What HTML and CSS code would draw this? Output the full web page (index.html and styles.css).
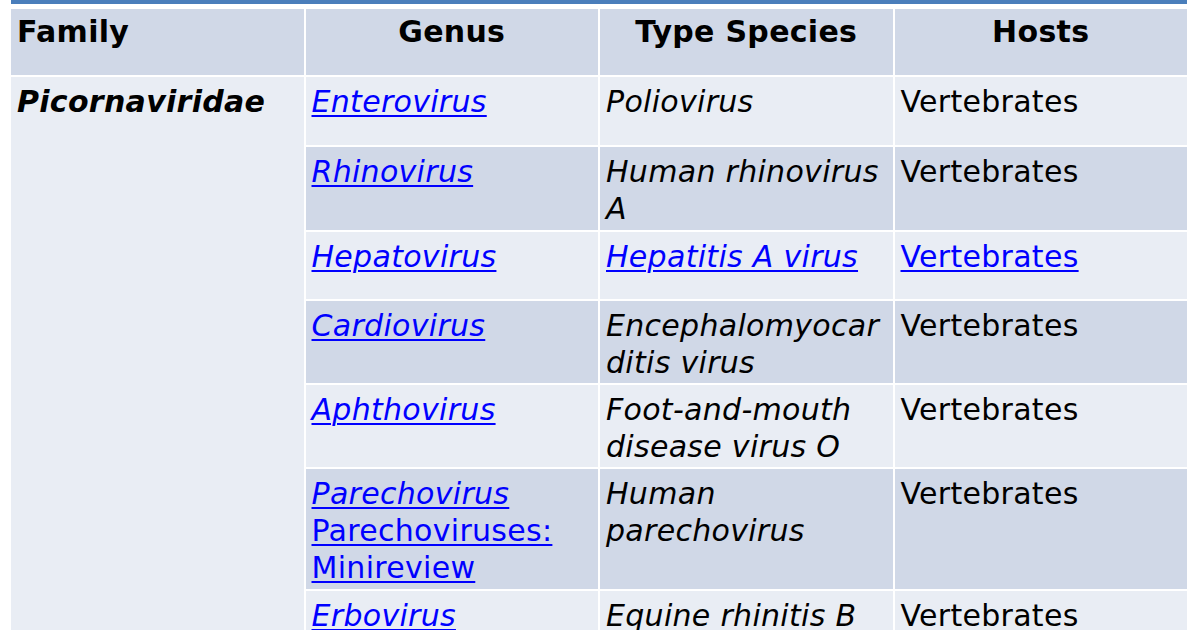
FILE: index.html
```html
<!DOCTYPE html>
<html>
<head>
<meta charset="utf-8">
<link rel="stylesheet" href="styles.css">
</head>
<body>
<div class="page">
  <div class="topbar"></div>
  <div class="grid">
    <div class="cell head left">Family</div>
    <div class="cell head">Genus</div>
    <div class="cell head">Type Species</div>
    <div class="cell head">Hosts</div>

    <div class="cell family"><b><i>Picornaviridae</i></b></div>

    <div class="cell light"><a class="it" href="#">Enterovirus</a></div>
    <div class="cell light it">Poliovirus</div>
    <div class="cell light">Vertebrates</div>

    <div class="cell dark"><a class="it" href="#">Rhinovirus</a></div>
    <div class="cell dark it">Human rhinovirus<br>A</div>
    <div class="cell dark">Vertebrates</div>

    <div class="cell light"><a class="it" href="#">Hepatovirus</a></div>
    <div class="cell light"><a class="it" href="#">Hepatitis A virus</a></div>
    <div class="cell light"><a href="#">Vertebrates</a></div>

    <div class="cell dark"><a class="it" href="#">Cardiovirus</a></div>
    <div class="cell dark it">Encephalomyocar<br>ditis virus</div>
    <div class="cell dark">Vertebrates</div>

    <div class="cell light"><a class="it" href="#">Aphthovirus</a></div>
    <div class="cell light it">Foot-and-mouth<br>disease virus O</div>
    <div class="cell light">Vertebrates</div>

    <div class="cell dark"><a class="it" href="#">Parechovirus</a><br><a href="#">Parechoviruses:<br>Minireview</a></div>
    <div class="cell dark it">Human<br>parechovirus</div>
    <div class="cell dark">Vertebrates</div>

    <div class="cell light"><a class="it" href="#">Erbovirus</a></div>
    <div class="cell light it">Equine rhinitis B</div>
    <div class="cell light">Vertebrates</div>
  </div>
</div>
</body>
</html>
```

FILE: styles.css
```css
html, body {
  margin: 0;
  padding: 0;
  background: #ffffff;
  overflow: hidden;
}

.page {
  width: 1200px;
  height: 630px;
  padding-left: 11px;
  box-sizing: border-box;
  font-family: "DejaVu Sans", Verdana, sans-serif;
  font-size: 30px;
  line-height: 37px;
  letter-spacing: 0.3px;
  color: #000000;
}

.topbar {
  width: 1176px;
  height: 4px;
  background: #4a7ebb;
  margin-bottom: 5px;
}

.grid {
  width: 1176px;
  display: grid;
  grid-template-columns: repeat(4, 1fr);
  grid-template-rows: 66px 68px 83px 67px 82px 82px 120px 68px;
  gap: 2px;
  background: #ffffff;
}

.cell {
  padding: 6px 6px 3px 6px;
  white-space: nowrap;
  overflow: hidden;
}

.head {
  padding-top: 4px;
  background: #d0d8e7;
  font-weight: bold;
  text-align: center;
}

.head.left {
  text-align: left;
}

.family {
  grid-column: 1;
  grid-row: 2 / span 7;
  background: #e9edf4;
}

.light {
  background: #e9edf4;
}

.dark {
  background: #d0d8e7;
}

.it {
  font-style: italic;
}

a {
  color: #0000ff;
  text-decoration: underline;
  text-decoration-thickness: 1.5px;
  text-underline-offset: 3px;
}
```
